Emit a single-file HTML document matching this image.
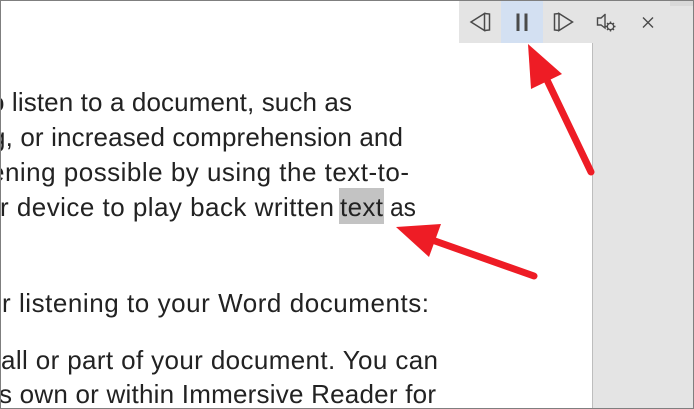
<!DOCTYPE html>
<html><head><meta charset="utf-8">
<style>
html,body{margin:0;padding:0;background:#fff}
body{width:694px;height:409px;overflow:hidden;position:relative}
svg{position:absolute;left:0;top:0}
text{font-family:"Liberation Sans",sans-serif;font-size:26px;fill:#222}
</style></head>
<body>
<svg width="694" height="409" viewBox="0 0 694 409" xmlns="http://www.w3.org/2000/svg">
<rect width="694" height="409" fill="#fff"/>
<rect x="339" y="188" width="45" height="36" fill="#c3c3c3"/>
<text x="-10" y="111" textLength="362" lengthAdjust="spacing">o listen to a document, such as</text>
<text x="-9" y="146" textLength="412" lengthAdjust="spacing">g, or increased comprehension and</text>
<text x="-10" y="181" textLength="419" lengthAdjust="spacing">ening possible by using the text-to-</text>
<text x="0" y="216" textLength="334" lengthAdjust="spacing">r device to play back written</text>
<text x="340" y="216" textLength="43" lengthAdjust="spacing">text</text>
<text x="390" y="216" textLength="26" lengthAdjust="spacingAndGlyphs">as</text>
<text x="-13" y="312" textLength="442" lengthAdjust="spacing">or listening to your Word documents:</text>
<text x="1" y="369" textLength="437" lengthAdjust="spacing">all or part of your document. You can</text>
<text x="-1" y="403" textLength="437" lengthAdjust="spacing">s own or within Immersive Reader for</text>

<rect x="592" y="0" width="102" height="409" fill="#e4e4e4"/>
<rect x="592" y="43" width="1" height="366" fill="#bdbdbd"/>
<rect x="459" y="1" width="211" height="42" fill="#e4e4e4"/>
<rect x="670" y="1" width="23" height="5" fill="#d8d8d8"/>
<rect x="501" y="1" width="42" height="42" fill="#d3e0f2"/>

<g fill="none" stroke="#4a4a4a" stroke-width="1.5" stroke-linejoin="miter">
<path d="M484.5 13.5V30.5L471 22Z"/>
<path d="M484.5 13.5L489.5 14V30L484.5 30.5"/>
<path d="M559 13.5V30.5L572.5 22Z"/>
<path d="M559 13.5L554.5 14V30L559 30.5"/>
</g>
<rect x="516.5" y="13.5" width="3" height="17.5" fill="#4a4a4a"/>
<rect x="524.5" y="13.5" width="3" height="17.5" fill="#4a4a4a"/>
<g fill="none" stroke="#4a4a4a" stroke-width="1.4">
<path d="M605.5 14L601 18H597.5V25H601L605 28V14"/>
<circle cx="610.5" cy="26.5" r="3.2"/>
<path d="M610.5 21.5V23.3M610.5 29.7V31.5M605.5 26.5H607.3M613.7 26.5H615.5M607 23L608.3 24.3M612.7 28.7L614 30M607 30L608.3 28.7M612.7 24.3L614 23"/>
<path d="M643 17.5L653 27.5M653 17.5L643 27.5" stroke-width="1.4"/>
</g>

<path d="M547 80L591 172" stroke="#ee1c25" stroke-width="7" stroke-linecap="round" fill="none"/>
<path d="M528 44L562 74L531 89Z" fill="#ee1c25"/>
<path d="M435 241L534 276" stroke="#ee1c25" stroke-width="7" stroke-linecap="round" fill="none"/>
<path d="M396 227L441 224L429 257Z" fill="#ee1c25"/>

<rect x="0" y="0" width="694" height="1" fill="#7f7f7f"/>
<rect x="0" y="0" width="1" height="409" fill="#7f7f7f"/>
<rect x="693" y="0" width="1" height="409" fill="#7f7f7f"/>
<rect x="0" y="408" width="694" height="1" fill="#7f7f7f"/>
</svg>
</body></html>
